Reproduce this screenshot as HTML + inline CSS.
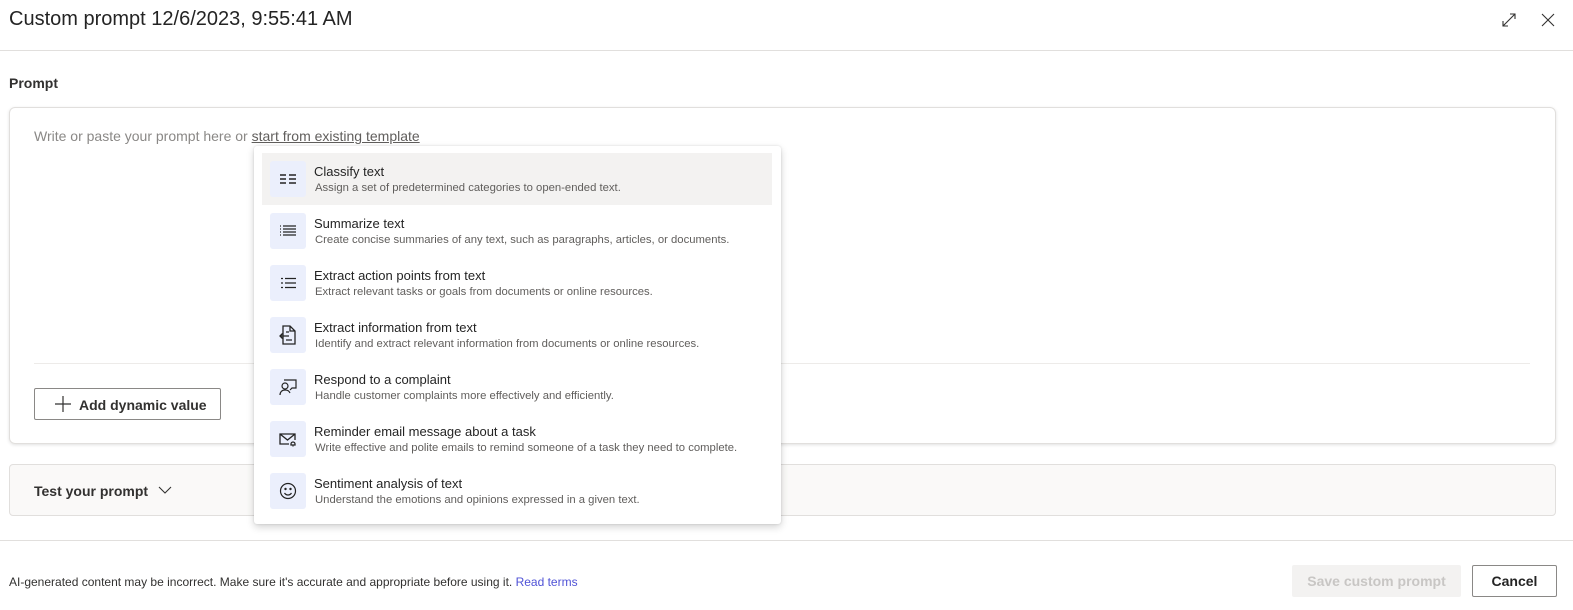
<!DOCTYPE html>
<html><head><style>
*{box-sizing:border-box;margin:0;padding:0}
body{width:1573px;height:610px;overflow:hidden;background:#fff;font-family:"Liberation Sans",sans-serif;color:#323130;position:relative}
.abs{position:absolute}
.title{left:9px;top:8px;font-size:20px;color:#242424}
.hr{height:1px;background:#e1dfdd}
.item{position:absolute;left:262px;width:510px;height:52px}
.item.h{background:#f3f2f1}
.ic{position:absolute;left:8px;top:8px;width:36px;height:36px;background:#ebeffc;border-radius:3px;display:flex;align-items:center;justify-content:center}
.t1{position:absolute;left:52px;top:11px;font-size:13px;color:#242424}
.t2{position:absolute;left:53px;top:29px;font-size:11.3px;color:#605e5c}
</style></head><body>
<div class="abs title">Custom prompt 12/6/2023, 9:55:41 AM</div>
<svg class="abs" style="left:1500px;top:11px" width="18" height="18" viewBox="0 0 18 18" fill="none" stroke="#323130" stroke-width="1.1"><path d="M3 15L15 3M10 3h5v5M3 10v5h5"/></svg>
<svg class="abs" style="left:1540px;top:12px" width="16" height="16" viewBox="0 0 16 16" stroke="#323130" stroke-width="1.1"><path d="M2 2L14 14M14 2L2 14"/></svg>
<div class="abs hr" style="left:0;top:50px;width:1573px"></div>
<div class="abs" style="left:9px;top:75px;font-size:14px;font-weight:bold;color:#323130">Prompt</div>
<div class="abs" style="left:9px;top:107px;width:1547px;height:337px;border:1px solid #e1dfdd;border-radius:6px;box-shadow:0 1px 3px rgba(0,0,0,.12)"></div>
<div class="abs" style="left:34px;top:128px;font-size:14px;color:#8a8886">Write or paste your prompt here or <span style="color:#605e5c;text-decoration:underline">start from existing template</span></div>
<div class="abs hr" style="left:34px;top:363px;width:1496px;background:#edebe9"></div>
<div class="abs" style="left:34px;top:388px;width:187px;height:32px;border:1px solid #8a8886;border-radius:2px;font-size:14px;font-weight:bold;padding:8px 0 0 44px">Add dynamic value</div>
<svg class="abs" style="left:54px;top:395px" width="18" height="18" viewBox="0 0 18 18" stroke="#323130" stroke-width="1.2"><path d="M9 1v16M1 9h16"/></svg>
<div class="abs" style="left:9px;top:464px;width:1547px;height:52px;border:1px solid #e1dfdd;border-radius:4px;background:#faf9f8"></div>
<div class="abs" style="left:34px;top:483px;font-size:14px;font-weight:bold">Test your prompt</div>
<svg class="abs" style="left:158px;top:485px" width="14" height="10" viewBox="0 0 14 10" fill="none" stroke="#323130" stroke-width="1.1"><path d="M1 2l6 6 6-6"/></svg>
<div class="abs hr" style="left:0;top:540px;width:1573px"></div>
<div class="abs" style="left:9px;top:575px;font-size:12px;color:#323130">AI-generated content may be incorrect. Make sure it's accurate and appropriate before using it. <span style="color:#4f52d6">Read terms</span></div>
<div class="abs" style="left:1292px;top:565px;width:169px;height:32px;background:#f3f2f1;border-radius:2px;color:#c8c6c4;font-size:14px;font-weight:bold;text-align:center;line-height:32px">Save custom prompt</div>
<div class="abs" style="left:1472px;top:565px;width:85px;height:32px;border:1px solid #8a8886;border-radius:2px;font-size:14px;font-weight:bold;text-align:center;line-height:30px;color:#242424">Cancel</div>

<div class="abs" style="left:254px;top:146px;width:527px;height:378px;background:#fff;border-radius:3px;box-shadow:0 3px 8px rgba(0,0,0,.18),0 0 2px rgba(0,0,0,.12)"></div>
<div class="item h" style="top:153px"><div class="ic"><svg width="18" height="16" viewBox="0 0 18 16" stroke="#242424" stroke-width="1.4"><path d="M1 4h6M1 8h6M1 12h6M10 4h7M10 8h7M10 12h7"/></svg></div><div class="t1">Classify text</div><div class="t2">Assign a set of predetermined categories to open-ended text.</div></div>
<div class="item" style="top:205px"><div class="ic"><svg width="18" height="16" viewBox="0 0 18 16" stroke="#242424" stroke-width="1.3"><path d="M1 3h1M1 6h1M1 9h1M1 12h1M4 3h13M4 6h13M4 9h13M4 12h13"/></svg></div><div class="t1">Summarize text</div><div class="t2">Create concise summaries of any text, such as paragraphs, articles, or documents.</div></div>
<div class="item" style="top:257px"><div class="ic"><svg width="18" height="16" viewBox="0 0 18 16" stroke="#242424" stroke-width="1.3"><path d="M2 3.5h2M2 8h2M2 12.5h2M6 3.5h11M6 8h11M6 12.5h11"/></svg></div><div class="t1">Extract action points from text</div><div class="t2">Extract relevant tasks or goals from documents or online resources.</div></div>
<div class="item" style="top:309px"><div class="ic"><svg width="18" height="20" viewBox="0 0 18 20" fill="none" stroke="#242424" stroke-width="1.3"><path d="M4 1h7l5 5v13H4zM11 1v5h5M1 11h9M3.5 8.5L1 11l2.5 2.5M7 15h6M7 7h3"/></svg></div><div class="t1">Extract information from text</div><div class="t2">Identify and extract relevant information from documents or online resources.</div></div>
<div class="item" style="top:361px"><div class="ic"><svg width="18" height="18" viewBox="0 0 18 18" fill="none" stroke="#242424" stroke-width="1.2"><path d="M5 2h12v8h-4l-2 2"/><circle cx="6" cy="8" r="3"/><path d="M1 17c0-3 2-5 5-5s4 1 5 3"/></svg></div><div class="t1">Respond to a complaint</div><div class="t2">Handle customer complaints more effectively and efficiently.</div></div>
<div class="item" style="top:413px"><div class="ic"><svg width="18" height="16" viewBox="0 0 18 16" fill="none" stroke="#242424" stroke-width="1.3"><path d="M10 13H1V3h15v6M1 3l7.5 6L16 3"/><path d="M12 13a2 2 0 014 0v1h-4zM13.5 15h1"/></svg></div><div class="t1">Reminder email message about a task</div><div class="t2">Write effective and polite emails to remind someone of a task they need to complete.</div></div>
<div class="item" style="top:465px"><div class="ic"><svg width="18" height="18" viewBox="0 0 18 18" fill="none" stroke="#242424" stroke-width="1.2"><circle cx="9" cy="9" r="7.5"/><path d="M5.5 11c1 1.5 2 2 3.5 2s2.5-.5 3.5-2"/><circle cx="6.5" cy="7" r=".6" fill="#242424"/><circle cx="11.5" cy="7" r=".6" fill="#242424"/></svg></div><div class="t1">Sentiment analysis of text</div><div class="t2">Understand the emotions and opinions expressed in a given text.</div></div>
</body></html>
